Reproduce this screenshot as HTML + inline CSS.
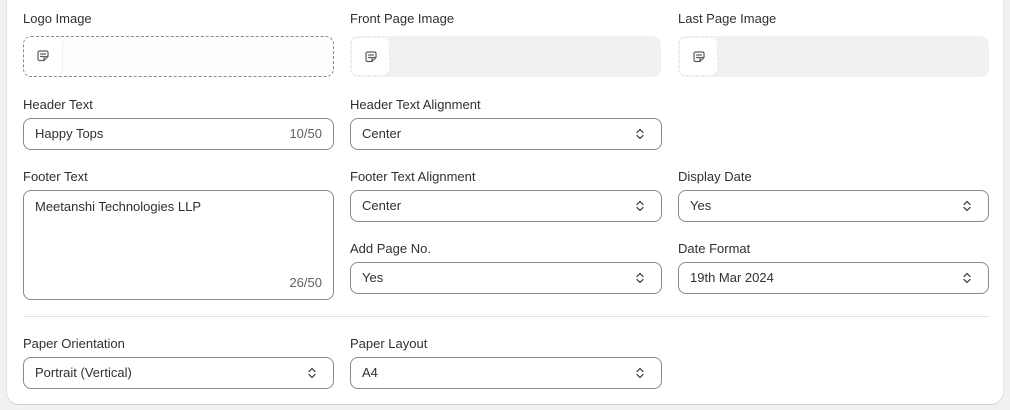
<!DOCTYPE html>
<html><head><style>
*{box-sizing:border-box;margin:0;padding:0}
body{width:1010px;height:410px;background:#f1f1f1;font-family:"Liberation Sans",sans-serif;font-size:13px;color:#303030;position:relative;overflow:hidden}
.card{position:absolute;left:7px;top:-12px;width:996px;height:416px;background:#fff;border-radius:12px;box-shadow:0 1px 0 #d4d4d4,0 0 0 1px #e3e3e3}
.lbl{position:absolute;font-size:13px;color:#303030}
.inp{position:absolute;height:32px;border:1px solid #8a8a8a;border-radius:8px;background:#fff;padding:0 11px;line-height:30px}
.chev{position:absolute;right:15px;top:8px}
.cnt{position:absolute;right:11px;top:0;color:#616161}
.up{position:absolute;top:36px;width:311px;height:41px;border-radius:8px;background:#f1f1f1}
.up.d{background:#fdfdfd;border:1px dashed #8a8a8a}
.ib{position:absolute;left:1px;top:1px;width:39px;height:39px;background:#fff;border-radius:7px;border:1px dashed #e6e6e6}
.up.d .ib{left:0;top:0;border:none;border-right:1px solid #f0f0f0;height:39px}
.ib svg{position:absolute;left:12px;top:12px}
</style></head><body>
<div class="card"></div>
<svg width="0" height="0" style="position:absolute"><defs>
<symbol id="ic" viewBox="0 0 14 14"><path d="M3.5 2h7A1.5 1.5 0 0 1 12 3.5v4L8 11.5H3.5A1.5 1.5 0 0 1 2 10V3.5A1.5 1.5 0 0 1 3.5 2z M12 7.5H9.5A1.5 1.5 0 0 0 8 9v2.5 M4.5 5h5 M4.5 7.5h3" fill="none" stroke="#5c5c5c" stroke-width="1.2" stroke-linejoin="round" stroke-linecap="round"/></symbol>
<symbol id="ch" viewBox="0 0 12 14"><path d="M3 5.5L6 2.5L9 5.5M3 8.5L6 11.5L9 8.5" fill="none" stroke="#4a4a4a" stroke-width="1.3" stroke-linecap="round" stroke-linejoin="round"/></symbol>
</defs></svg>

<div class="lbl" style="left:23px;top:11px">Logo Image</div>
<div class="lbl" style="left:350px;top:11px">Front Page Image</div>
<div class="lbl" style="left:678px;top:11px">Last Page Image</div>
<div class="up d" style="left:23px"><div class="ib"><svg width="14" height="14"><use href="#ic"/></svg></div></div>
<div class="up" style="left:350px"><div class="ib"><svg width="14" height="14"><use href="#ic"/></svg></div></div>
<div class="up" style="left:678px"><div class="ib"><svg width="14" height="14"><use href="#ic"/></svg></div></div>

<div class="lbl" style="left:23px;top:97px">Header Text</div>
<div class="lbl" style="left:350px;top:97px">Header Text Alignment</div>
<div class="inp" style="left:23px;top:118px;width:311px">Happy Tops<span class="cnt">10/50</span></div>
<div class="inp" style="left:350px;top:118px;width:312px">Center<svg class="chev" width="12" height="14"><use href="#ch"/></svg></div>

<div class="lbl" style="left:23px;top:169px">Footer Text</div>
<div class="lbl" style="left:350px;top:169px">Footer Text Alignment</div>
<div class="lbl" style="left:678px;top:169px">Display Date</div>
<div class="inp" style="left:23px;top:190px;width:311px;height:110px;line-height:16px;padding-top:8px">Meetanshi Technologies LLP<span class="cnt" style="top:84px">26/50</span></div>
<div class="inp" style="left:350px;top:190px;width:312px">Center<svg class="chev" width="12" height="14"><use href="#ch"/></svg></div>
<div class="inp" style="left:678px;top:190px;width:311px">Yes<svg class="chev" width="12" height="14"><use href="#ch"/></svg></div>

<div class="lbl" style="left:350px;top:241px">Add Page No.</div>
<div class="lbl" style="left:678px;top:241px">Date Format</div>
<div class="inp" style="left:350px;top:262px;width:312px">Yes<svg class="chev" width="12" height="14"><use href="#ch"/></svg></div>
<div class="inp" style="left:678px;top:262px;width:311px">19th Mar 2024<svg class="chev" width="12" height="14"><use href="#ch"/></svg></div>

<div style="position:absolute;left:23px;top:316px;width:966px;height:1px;background:#e3e3e3"></div>

<div class="lbl" style="left:23px;top:336px">Paper Orientation</div>
<div class="lbl" style="left:350px;top:336px">Paper Layout</div>
<div class="inp" style="left:23px;top:357px;width:311px">Portrait (Vertical)<svg class="chev" width="12" height="14"><use href="#ch"/></svg></div>
<div class="inp" style="left:350px;top:357px;width:312px">A4<svg class="chev" width="12" height="14"><use href="#ch"/></svg></div>
</body></html>
